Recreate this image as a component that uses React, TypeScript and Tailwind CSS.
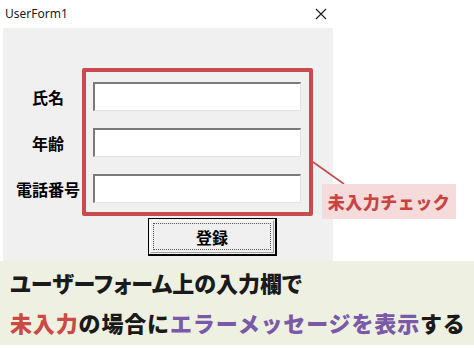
import React from "react";

const jp = "font-['Noto_Sans_CJK_JP',sans-serif]";

function TextBox() {
  return (
    <div className="h-[29px] w-[208px] bg-white border-t-2 border-l-2 border-b border-r border-t-[#7a7a7a] border-l-[#7a7a7a] border-b-[#e3e3e3] border-r-[#e3e3e3]" />
  );
}

export default function App() {
  return (
    <div className={`relative w-[474px] h-[348px] bg-white overflow-hidden ${jp}`}>
      {/* window */}
      <div className="w-[336px] flex flex-col">
        <div className="h-[28px] flex items-center justify-between pl-[5px] pr-[9px]">
          <span className="text-[12px] text-[#1a1a1a] font-['Noto_Sans',sans-serif]">UserForm1</span>
          <svg width="12" height="12" viewBox="0 0 12 12">
            <path d="M1 1L11 11M11 1L1 11" stroke="#1a1a1a" strokeWidth="1.1" />
          </svg>
        </div>
        <div className="ml-[3px] w-[330px] h-[233px] bg-[#f0f0f0] pt-[40px] flex flex-col">
          <div className="flex">
            <div className="w-[68px] ml-[11px] pt-[14px] flex flex-col gap-[17px]">
              {["氏名", "年齢", "電話番号"].map((l) => (
                <div key={l} className="h-[29px] flex items-center justify-center text-[16px] font-bold text-black leading-none">
                  {l}
                </div>
              ))}
            </div>
            <div className="w-[231px] h-[148px] border-[4px] border-[#c94b4d] rounded-[2px] pl-[7px] pt-[10px] flex flex-col gap-[17px]">
              <TextBox />
              <TextBox />
              <TextBox />
            </div>
          </div>
          <div className="ml-[145px] mt-[2px] w-[129px] h-[38px] border border-black border-b-2 border-r-2 bg-[#f0f0f0] p-[1px]">
            <div className="w-full h-full border border-t-white border-l-white border-b-[#a0a0a0] border-r-[#a0a0a0] p-[2px]">
              <div className="w-full h-full border border-dotted border-[#555] flex items-center justify-center text-[16px] font-bold text-black leading-none">
                登録
              </div>
            </div>
          </div>
        </div>
      </div>

      {/* callout line */}
      <svg className="absolute left-[311px] top-[160px]" width="36" height="26" viewBox="0 0 36 26">
        <path d="M2 2L33 24" stroke="#c94b4d" strokeWidth="1.6" />
      </svg>
      {/* callout label */}
      <div className="absolute left-[322px] top-[184px] w-[134px] h-[35px] bg-[#f5dbdb] flex items-center justify-center text-[17px] font-black text-[#c8443f] leading-none tracking-[0.5px]">
        未入力チェック
      </div>

      {/* banner */}
      <div className="h-[84px] bg-[#eef1e2] pl-[10px] pt-[8px] flex flex-col gap-[14px] text-[22px] font-black leading-[26px] text-[#1a1a1a]">
        <div className="[font-feature-settings:'palt']">ユーザーフォーム上の入力欄で</div>
        <div className="tracking-[0.85px]">
          <span className="text-[#cc4a44]">未入力</span>
          の場合に
          <span className="text-[#7a5aa8]">エラーメッセージを表示</span>
          する
        </div>
      </div>
    </div>
  );
}
